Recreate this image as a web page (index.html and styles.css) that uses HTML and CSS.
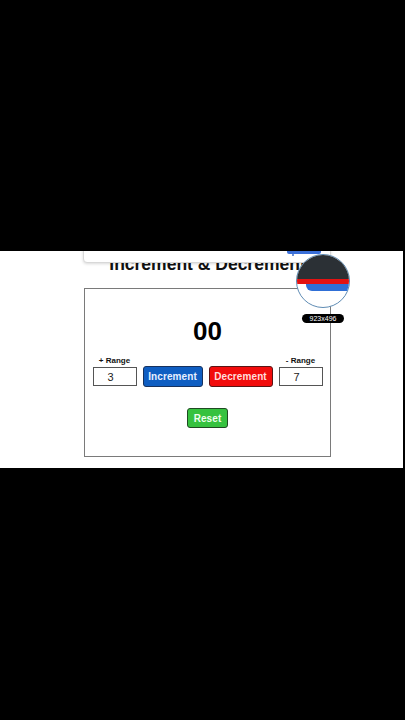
FILE: index.html
```html
<!DOCTYPE html>
<html>
<head>
<meta charset="utf-8">
<link rel="stylesheet" href="styles.css">
</head>
<body>
<div class="frame">
  <div class="topbox"><span class="topbar"></span><span class="topdot"></span></div>
  <div class="app">
    <h1 class="title">Increment &amp; Decrement</h1>
    <div class="card">
      <div class="count">00</div>
      <div class="controls">
        <div class="range">
          <span class="label">+ Range</span>
          <input class="field" type="text" value="3">
        </div>
        <button class="btn btn-inc">Increment</button>
        <button class="btn btn-dec">Decrement</button>
        <div class="range">
          <span class="label">- Range</span>
          <input class="field" type="text" value="7">
        </div>
      </div>
      <div class="reset-row"><button class="btn btn-reset">Reset</button></div>
    </div>
  </div>
  <div class="magnifier">
    <div class="mag-dark"></div>
    <div class="mag-red"></div>
    <div class="mag-blue"></div>
  </div>
  <div class="pill">923x496</div>
</div>
</body>
</html>
```

FILE: styles.css
```css
html, body {
  margin: 0;
  padding: 0;
  background: #000;
}
body {
  padding-top: 251px;
  font-family: "Liberation Sans", Arial, sans-serif;
}
.frame {
  position: relative;
  width: 403px;
  height: 217px;
  background: #fff;
  overflow: hidden;
}
.topbox {
  position: absolute;
  left: 83px;
  top: -6px;
  width: 246px;
  height: 16px;
  border: 1px solid #d8d8d8;
  border-radius: 0 0 4px 4px;
  background: #fff;
  box-shadow: 0 1px 3px rgba(0,0,0,0.15);
  z-index: 2;
}
.topbar {
  position: absolute;
  left: 203px;
  top: 5px;
  width: 34px;
  height: 3px;
  background: #3a6fd8;
  border-radius: 0 0 2px 2px;
}
.topdot {
  position: absolute;
  left: 208px;
  top: 8px;
  width: 2px;
  height: 2px;
  background: #6a8fd8;
}
.app {
  margin-left: 84px;
  width: 247px;
}
.title {
  margin: 3px 0 14px;
  font-size: 17.5px;
  line-height: 20px;
  font-weight: bold;
  text-align: center;
  color: #111;
}
.card {
  box-sizing: border-box;
  height: 169px;
  border: 1px solid #7a7a7a;
  padding-top: 27px;
  display: flex;
  flex-direction: column;
  align-items: center;
}
.count {
  font-size: 26px;
  line-height: 30px;
  font-weight: bold;
  color: #000;
}
.controls {
  margin-top: 10px;
  display: flex;
  align-items: flex-end;
  gap: 6px;
}
.range {
  display: flex;
  flex-direction: column;
  align-items: center;
  gap: 1px;
}
.label {
  font-size: 8px;
  line-height: 10px;
  font-weight: bold;
  color: #111;
}
.field {
  box-sizing: border-box;
  width: 44px;
  height: 19px;
  margin: 0 0 1px;
  border: 1px solid #555;
  padding: 0 8px 0 0;
  font-family: "Liberation Sans", Arial, sans-serif;
  font-size: 11px;
  text-align: center;
  color: #222;
  background: #fff;
  outline: none;
}
.btn {
  box-sizing: border-box;
  height: 21px;
  margin: 0;
  padding: 0;
  border: 1px solid #2a2a2a;
  border-radius: 3px;
  font-family: "Liberation Sans", Arial, sans-serif;
  font-size: 10px;
  font-weight: bold;
  letter-spacing: 0.1px;
}
.btn-inc {
  width: 60px;
  background: #0f5ec2;
  color: #e8f0ff;
  border-color: #17325e;
}
.btn-dec {
  width: 64px;
  background: #f20c0c;
  color: #ffdede;
  border-color: #5a1515;
}
.reset-row {
  margin-top: 21px;
  display: flex;
  justify-content: center;
}
.btn-reset {
  width: 41px;
  height: 20px;
  background: #36c23f;
  color: #effff0;
  border-color: #1f4a22;
}
.magnifier {
  position: absolute;
  left: 296px;
  top: 3px;
  width: 54px;
  height: 54px;
  box-sizing: border-box;
  border: 1px solid #5f8cb4;
  border-radius: 50%;
  overflow: hidden;
  background: #fff;
  z-index: 3;
}
.mag-dark {
  height: 24px;
  background: #2b3035;
}
.mag-red {
  height: 5px;
  background: #e31212;
}
.mag-blue {
  margin-left: 9px;
  height: 7px;
  background: #2f6fd6;
  border-radius: 0 0 0 6px;
}
.pill {
  position: absolute;
  left: 302px;
  top: 63px;
  width: 42px;
  height: 9px;
  border-radius: 5px;
  background: #000;
  color: #fff;
  font-size: 7px;
  line-height: 9px;
  text-align: center;
  z-index: 3;
}
```
